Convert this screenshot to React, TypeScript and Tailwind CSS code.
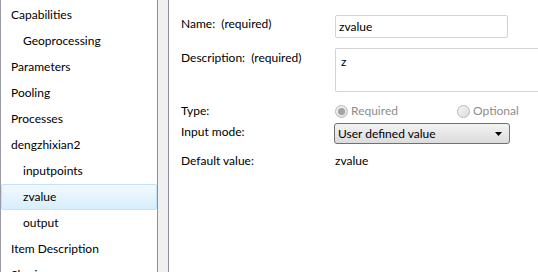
import React from "react";

const items: { label: string; indent?: boolean; selected?: boolean }[] = [
  { label: "Capabilities" },
  { label: "Geoprocessing", indent: true },
  { label: "Parameters" },
  { label: "Pooling" },
  { label: "Processes" },
  { label: "dengzhixian2" },
  { label: "inputpoints", indent: true },
  { label: "zvalue", indent: true, selected: true },
  { label: "output", indent: true },
  { label: "Item Description" },
  { label: "Sharing" },
];

function Radio({ checked, label }: { checked?: boolean; label: string }) {
  return (
    <div className="flex items-center gap-[3px] text-[#8d8d8d]">
      <span className="flex h-[13px] w-[13px] items-center justify-center rounded-full border border-[#b8b8b8] bg-gradient-to-br from-[#f4f4f4] to-[#dedede]">
        {checked && <span className="h-[7px] w-[7px] rounded-full bg-[#a2a2a2]" />}
      </span>
      <span>{label}</span>
    </div>
  );
}

export default function App() {
  return (
    <div
      className="flex h-[272px] w-[538px] overflow-hidden bg-white text-[12px] text-black"
      style={{ fontFamily: '"Lato", "Liberation Sans", sans-serif' }}
    >
      <div className="flex w-[157px] shrink-0 flex-col border-l border-[#9a9aa8] pt-[2px]">
        {items.map((it) => (
          <div
            key={it.label}
            className={
              "flex h-[26px] shrink-0 items-center rounded-[2px] border " +
              (it.selected
                ? "border-[#c3e2f8] bg-gradient-to-b from-[#f3f9fe] to-[#d7edfc]"
                : "border-transparent") +
              (it.indent ? " pl-[21px]" : " pl-[9px]")
            }
          >
            {it.label}
          </div>
        ))}
      </div>
      <div className="w-[12px] shrink-0 border-x border-[#8e8e9c] bg-[#f0f0f0]" />
      <div className="flex flex-1 flex-col pl-[12px] pt-[15px]">
        <div className="flex">
          <div className="w-[154px]">Name:&nbsp; (required)</div>
          <div className="flex h-[23px] w-[173px] items-center rounded-[2px] border border-[#d3d3d3] px-[3px]">
            zvalue
          </div>
        </div>
        <div className="mt-[10px] flex">
          <div className="w-[154px] pt-[1px]">Description:&nbsp; (required)</div>
          <div className="h-[44px] flex-1 rounded-l-[2px] border border-r-0 border-[#d3d3d3] px-[5px] pt-[4px]">
            z
          </div>
        </div>
        <div className="mt-[10px] flex items-center">
          <div className="w-[154px]">Type:</div>
          <div className="w-[122px]">
            <Radio checked label="Required" />
          </div>
          <Radio label="Optional" />
        </div>
        <div className="mt-[3px] flex items-center">
          <div className="w-[153px] self-start">Input mode:</div>
          <div className="flex h-[21px] w-[176px] items-center justify-between rounded-[3px] border border-[#707070] bg-gradient-to-b from-[#f3f3f3] to-[#dcdcdc] pl-[3px] pr-[7px]">
            <span>User defined value</span>
            <svg width="7" height="4" viewBox="0 0 7 4">
              <path d="M0 0h7L3.5 4z" fill="#000" />
            </svg>
          </div>
        </div>
        <div className="mt-[8px] flex items-center">
          <div className="w-[154px]">Default value:</div>
          <div>zvalue</div>
        </div>
      </div>
    </div>
  );
}
